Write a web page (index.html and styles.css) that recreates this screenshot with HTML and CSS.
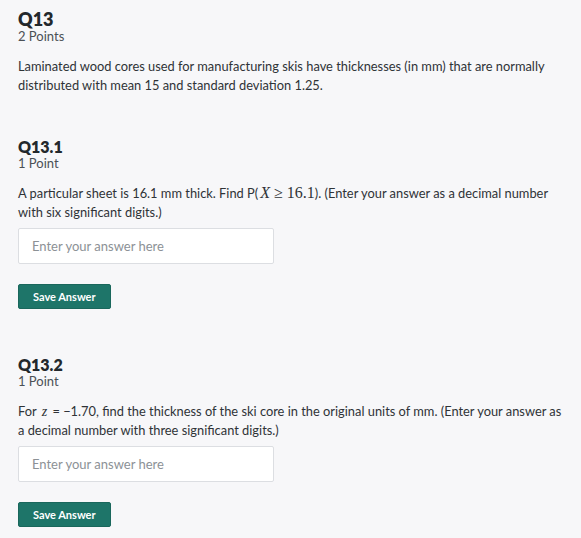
FILE: index.html
```html
<!DOCTYPE html>
<html lang="en">
<head>
    <meta charset="UTF-8">
    <meta name="viewport" content="width=device-width, initial-scale=1.0">
    <title>Q13</title>
    <link rel="stylesheet" href="styles.css">
</head>
<body>
    <main class="page">
        <section class="question">
            <h2 class="q-title">Q13</h2>
            <div class="q-points">2 Points</div>
            <p class="q-text">Laminated wood cores used for manufacturing skis have thicknesses (in mm) that are normally distributed with mean 15 and standard deviation 1.25.</p>
        </section>

        <section class="subquestion">
            <h3 class="sub-title">Q13.1</h3>
            <div class="q-points">1 Point</div>
            <p class="q-text">A particular sheet is 16.1 mm thick. Find P(<span class="math"><i>X</i> &ge; 16.1</span>). (Enter your answer as a decimal number with six significant digits.)</p>
            <input class="answer-input" type="text" placeholder="Enter your answer here">
            <button class="save-btn" type="button">Save Answer</button>
        </section>

        <section class="subquestion">
            <h3 class="sub-title">Q13.2</h3>
            <div class="q-points">1 Point</div>
            <p class="q-text">For <i class="math-var">z</i> = &minus;1.70, find the thickness of the ski core in the original units of mm. (Enter your answer as a decimal number with three significant digits.)</p>
            <input class="answer-input" type="text" placeholder="Enter your answer here">
            <button class="save-btn" type="button">Save Answer</button>
        </section>
    </main>
</body>
</html>
```

FILE: styles.css
```css
body {
    margin: 0;
    padding: 0;
    background-color: #f7f7f9;
    color: #2f3337;
    font-family: Lato, "Open Sans", sans-serif;
}
.page {
    padding: 9px 18px 0 18px;
    max-width: 550px;
}
.q-title {
    margin: 0;
    font-size: 18px;
    line-height: 20px;
    font-weight: 800;
    color: #23282c;
}
.sub-title {
    margin: 0;
    font-size: 16px;
    line-height: 18px;
    font-weight: 800;
    color: #23282c;
}
.q-points {
    font-size: 13px;
    line-height: 15px;
    color: #4b5055;
}
.q-text {
    margin: 13px 0 0 0;
    font-size: 12.85px;
    line-height: 19px;
    color: #2f3337;
}
.math {
    padding-left: 2px;
    font-family: "Liberation Serif", "DejaVu Serif", serif;
    font-size: 16px;
    line-height: 1;
}
.math-var {
    padding: 0 2px;
    font-family: "Liberation Serif", "DejaVu Serif", serif;
    font-size: 14px;
    line-height: 1;
}
.subquestion {
    margin-top: 43px;
}
.subquestion + .subquestion {
    margin-top: 47px;
}
.answer-input {
    display: block;
    box-sizing: border-box;
    width: 256px;
    height: 36px;
    margin-top: 6px;
    padding: 0 13px;
    border: 1px solid #dcdee2;
    border-radius: 2px;
    background: white;
    font-family: Lato, sans-serif;
    font-size: 13px;
    color: #2f3337;
}
.answer-input::placeholder {
    color: #8c9196;
}
.save-btn {
    display: block;
    box-sizing: border-box;
    height: 25px;
    margin-top: 20px;
    padding: 0 14px;
    border: 1px solid #1a675c;
    border-radius: 2px;
    background-color: #1e7569;
    color: white;
    font-family: Lato, sans-serif;
    font-size: 11px;
    font-weight: 700;
    cursor: pointer;
}
```
